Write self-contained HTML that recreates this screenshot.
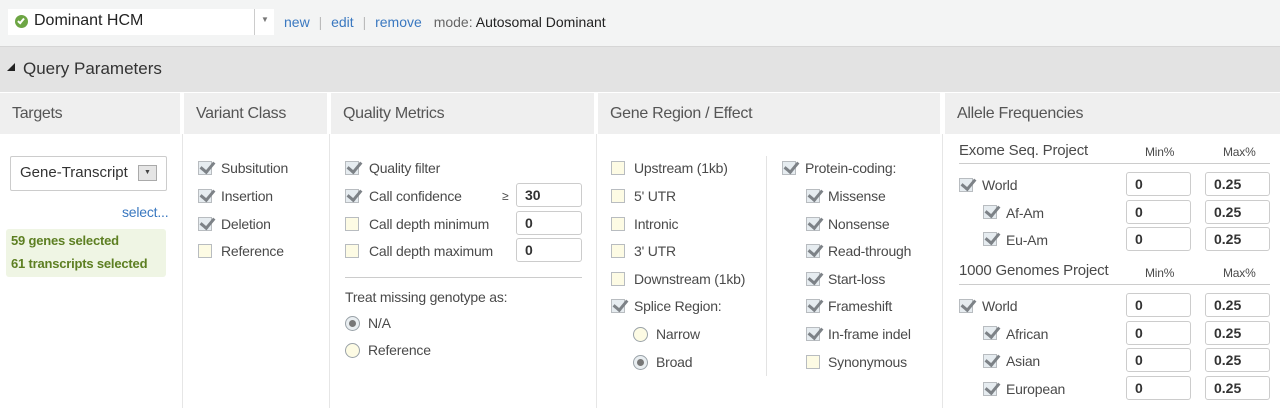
<!DOCTYPE html>
<html><head><meta charset="utf-8"><style>
*{box-sizing:border-box;margin:0;padding:0}
body{width:1280px;height:408px;background:#fff;font-family:"Liberation Sans",sans-serif;color:#444;font-size:14px;position:relative;overflow:hidden}
.a{position:absolute;white-space:nowrap}
.t{position:absolute;white-space:nowrap;line-height:18px;transform:translateY(-9px);font-size:14px;color:#4a4a4a;letter-spacing:-0.2px}
.cb{position:absolute;width:14px;height:14px;border:1px solid #b8bcc0;background:#fdfbe4;transform:translateY(-7px)}
.cb.c{background:#e6ecf0}
.cb.c:after{content:"";position:absolute;left:4px;top:-3px;width:6px;height:11px;border:solid #7d8287;border-width:0 3px 3px 0;transform:rotate(40deg)}
.rd{position:absolute;width:15px;height:15px;border:1px solid #9aa2a8;border-radius:50%;background:#fdfbe4;transform:translateY(-7px)}
.rd.c{background:#e9eef1}
.rd.c:after{content:"";position:absolute;left:3px;top:3px;width:7px;height:7px;border-radius:50%;background:#777}
.in{position:absolute;height:24px;border:1px solid #ccc;border-radius:3px;background:#fff;font-weight:bold;font-size:14px;line-height:22px;padding-left:8px;color:#333;transform:translateY(-12px)}
.hd{position:absolute;top:93px;height:41px;background:#efefef;font-size:16px;line-height:41px;padding-left:12px;color:#555;letter-spacing:-0.3px}
.vl{position:absolute;top:134px;bottom:0;width:1px;background:#e6e6e6}
</style></head><body>
<div class="a" style="left:0;top:0;width:1280px;height:46px;background:#f3f4f4"></div>
<div class="a" style="left:8px;top:9px;width:266px;height:26px;background:#fff"></div>
<div class="a" style="left:254px;top:9px;width:1px;height:26px;background:#ccc"></div>
<div class="a" style="left:15px;top:15px;width:13px;height:13px;border-radius:50%;background:#6da544"></div>
<div class="a" style="left:19px;top:17px;width:4px;height:7px;border:solid #fff;border-width:0 2px 2px 0;transform:rotate(40deg)"></div>
<div class="a" style="left:34px;top:12px;font-size:16px;color:#222">Dominant HCM</div>
<div class="a" style="left:261px;top:15px;font-size:8px;color:#777">▼</div>
<div class="a" style="left:284px;top:14px;font-size:14px;color:#3a78c0">new <span style="color:#bbb;margin:0 5px">|</span> edit <span style="color:#bbb;margin:0 5px">|</span> remove <span style="color:#666;margin-left:8px">mode:</span> <span style="color:#222">Autosomal Dominant</span></div>
<div class="a" style="left:0;top:46px;width:1280px;height:46px;background:#e3e3e3;border-top:1px solid #d6d6d6"></div>
<div class="a" style="left:7px;top:63px;width:0;height:0;border-left:8px solid transparent;border-bottom:8px solid #222"></div>
<div class="a" style="left:23px;top:59px;font-size:17px;color:#333">Query Parameters</div>

<div class="hd" style="left:0;width:180px">Targets</div>
<div class="hd" style="left:184px;width:143px">Variant Class</div>
<div class="hd" style="left:331px;width:263px">Quality Metrics</div>
<div class="hd" style="left:598px;width:342px">Gene Region / Effect</div>
<div class="hd" style="left:945px;width:335px">Allele Frequencies</div>
<div class="vl" style="left:182px"></div><div class="vl" style="left:329px"></div><div class="vl" style="left:596px"></div><div class="vl" style="left:942px"></div>

<!-- Targets -->
<div class="a" style="left:10px;top:156px;width:157px;height:35px;border:1px solid #ccc;border-radius:2px"></div>
<div class="a" style="left:20px;top:164px;font-size:15px;color:#333">Gene-Transcript</div>
<div class="a" style="left:138px;top:165px;width:19px;height:16px;border:1px solid #aaa;background:#e5e5e5;font-size:7px;text-align:center;line-height:14px;color:#444">▼</div>
<div class="t" style="left:122px;top:212px;color:#3a78c0">select...</div>
<div class="a" style="left:6px;top:229px;width:160px;height:48px;background:#eff5e4;border-radius:3px"></div>
<div class="t" style="left:11px;top:241px;color:#5d7f22;font-weight:bold;font-size:13px">59 genes selected</div>
<div class="t" style="left:11px;top:264px;color:#5d7f22;font-weight:bold;font-size:13px">61 transcripts selected</div>

<!-- Variant class -->
<div class="cb c" style="left:198px;top:168px"></div><div class="t" style="left:221px;top:168px">Subsitution</div>
<div class="cb c" style="left:198px;top:196px"></div><div class="t" style="left:221px;top:196px">Insertion</div>
<div class="cb c" style="left:198px;top:224px"></div><div class="t" style="left:221px;top:224px">Deletion</div>
<div class="cb" style="left:198px;top:251px"></div><div class="t" style="left:221px;top:251px">Reference</div>

<!-- QM -->
<div class="cb c" style="left:345px;top:168px"></div><div class="t" style="left:369px;top:168px">Quality filter</div>
<div class="cb c" style="left:345px;top:196px"></div><div class="t" style="left:369px;top:196px">Call confidence</div>
<div class="t" style="left:502px;top:196px;font-size:12px">≥</div>
<div class="in" style="left:516px;top:195px;width:66px">30</div>
<div class="cb" style="left:345px;top:224px"></div><div class="t" style="left:369px;top:224px">Call depth minimum</div>
<div class="in" style="left:516px;top:223px;width:66px">0</div>
<div class="cb" style="left:345px;top:251px"></div><div class="t" style="left:369px;top:251px">Call depth maximum</div>
<div class="in" style="left:516px;top:250px;width:66px">0</div>
<div class="a" style="left:345px;top:277px;width:237px;height:1px;background:#ccc"></div>
<div class="t" style="left:345px;top:297px">Treat missing genotype as:</div>
<div class="rd c" style="left:345px;top:323px"></div><div class="t" style="left:368px;top:323px">N/A</div>
<div class="rd" style="left:345px;top:350px"></div><div class="t" style="left:368px;top:350px">Reference</div>

<!-- Gene -->
<div class="cb" style="left:611px;top:168px"></div><div class="t" style="left:634px;top:168px">Upstream (1kb)</div>
<div class="cb" style="left:611px;top:196px"></div><div class="t" style="left:634px;top:196px">5' UTR</div>
<div class="cb" style="left:611px;top:224px"></div><div class="t" style="left:634px;top:224px">Intronic</div>
<div class="cb" style="left:611px;top:251px"></div><div class="t" style="left:634px;top:251px">3' UTR</div>
<div class="cb" style="left:611px;top:279px"></div><div class="t" style="left:634px;top:279px">Downstream (1kb)</div>
<div class="cb c" style="left:611px;top:306px"></div><div class="t" style="left:634px;top:306px">Splice Region:</div>
<div class="rd" style="left:633px;top:334px"></div><div class="t" style="left:656px;top:334px">Narrow</div>
<div class="rd c" style="left:633px;top:362px"></div><div class="t" style="left:656px;top:362px">Broad</div>
<div class="a" style="left:766px;top:156px;width:1px;height:220px;background:#e3e3e3"></div>
<div class="cb c" style="left:782px;top:168px"></div><div class="t" style="left:805px;top:168px">Protein-coding:</div>
<div class="cb c" style="left:806px;top:196px"></div><div class="t" style="left:828px;top:196px">Missense</div>
<div class="cb c" style="left:806px;top:224px"></div><div class="t" style="left:828px;top:224px">Nonsense</div>
<div class="cb c" style="left:806px;top:251px"></div><div class="t" style="left:828px;top:251px">Read-through</div>
<div class="cb c" style="left:806px;top:279px"></div><div class="t" style="left:828px;top:279px">Start-loss</div>
<div class="cb c" style="left:806px;top:306px"></div><div class="t" style="left:828px;top:306px">Frameshift</div>
<div class="cb c" style="left:806px;top:334px"></div><div class="t" style="left:828px;top:334px">In-frame indel</div>
<div class="cb" style="left:806px;top:362px"></div><div class="t" style="left:828px;top:362px">Synonymous</div>

<!-- Allele -->
<div class="t" style="left:959px;top:151px;font-size:15px">Exome Seq. Project</div>
<div class="t" style="left:1145px;top:152px;font-size:12px">Min%</div>
<div class="t" style="left:1223px;top:152px;font-size:12px">Max%</div>
<div class="a" style="left:959px;top:163px;width:311px;height:1px;background:#ccc"></div>
<div class="cb c" style="left:959px;top:185px"></div><div class="t" style="left:982px;top:185px">World</div>
<div class="in" style="left:1126px;top:184px;width:65px">0</div><div class="in" style="left:1205px;top:184px;width:65px">0.25</div>
<div class="cb c" style="left:983px;top:212px"></div><div class="t" style="left:1006px;top:213px">Af-Am</div>
<div class="in" style="left:1126px;top:212px;width:65px">0</div><div class="in" style="left:1205px;top:212px;width:65px">0.25</div>
<div class="cb c" style="left:983px;top:239px"></div><div class="t" style="left:1006px;top:240px">Eu-Am</div>
<div class="in" style="left:1126px;top:239px;width:65px">0</div><div class="in" style="left:1205px;top:239px;width:65px">0.25</div>
<div class="t" style="left:959px;top:271px;font-size:15px">1000 Genomes Project</div>
<div class="t" style="left:1145px;top:273px;font-size:12px">Min%</div>
<div class="t" style="left:1223px;top:273px;font-size:12px">Max%</div>
<div class="a" style="left:959px;top:284px;width:311px;height:1px;background:#ccc"></div>
<div class="cb c" style="left:959px;top:306px"></div><div class="t" style="left:982px;top:306px">World</div>
<div class="in" style="left:1126px;top:305px;width:65px">0</div><div class="in" style="left:1205px;top:305px;width:65px">0.25</div>
<div class="cb c" style="left:983px;top:333px"></div><div class="t" style="left:1006px;top:334px">African</div>
<div class="in" style="left:1126px;top:333px;width:65px">0</div><div class="in" style="left:1205px;top:333px;width:65px">0.25</div>
<div class="cb c" style="left:983px;top:361px"></div><div class="t" style="left:1006px;top:361px">Asian</div>
<div class="in" style="left:1126px;top:360px;width:65px">0</div><div class="in" style="left:1205px;top:360px;width:65px">0.25</div>
<div class="cb c" style="left:983px;top:389px"></div><div class="t" style="left:1006px;top:389px">European</div>
<div class="in" style="left:1126px;top:388px;width:65px">0</div><div class="in" style="left:1205px;top:388px;width:65px">0.25</div>
</body></html>
